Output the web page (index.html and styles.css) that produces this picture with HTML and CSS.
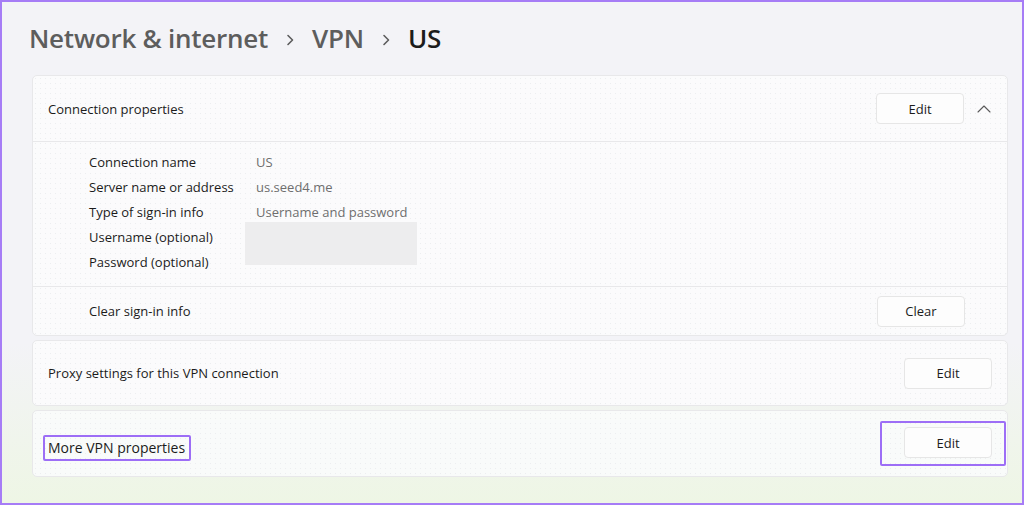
FILE: index.html
```
<!DOCTYPE html>
<html lang="en">
<head>
    <meta charset="UTF-8">
    <meta name="viewport" content="width=device-width, initial-scale=1.0">
    <title>VPN - US</title>
    <link rel="stylesheet" href="styles.css">
</head>

<body>
    <div class="frame">
        <h1 class="crumbs">
            <span class="crumb">Network &amp; internet</span>
            <svg class="sep" viewBox="0 0 8 12" width="8" height="12"><path d="M2 1.5l4.5 4.5L2 10.5" fill="none" stroke="currentColor" stroke-width="1.6" stroke-linecap="round" stroke-linejoin="round"></path></svg>
            <span class="crumb">VPN</span>
            <svg class="sep" viewBox="0 0 8 12" width="8" height="12"><path d="M2 1.5l4.5 4.5L2 10.5" fill="none" stroke="currentColor" stroke-width="1.6" stroke-linecap="round" stroke-linejoin="round"></path></svg>
            <span class="crumb current">US</span>
        </h1>

        <div class="card">
            <div class="row head">
                <span class="title">Connection properties</span>
                <button type="button" class="btn">Edit</button>
                <svg class="chev" viewBox="0 0 14 8" width="14" height="8"><path d="M1 7l6-6 6 6" fill="none" stroke="currentColor" stroke-width="1.1" stroke-linecap="round" stroke-linejoin="round"></path></svg>
            </div>
            <div class="details">
                <span class="label">Connection name</span>
                <span class="value">US</span>
                <span class="label">Server name or address</span>
                <span class="value">us.seed4.me</span>
                <span class="label">Type of sign-in info</span>
                <span class="value">Username and password</span>
                <span class="label">Username (optional)</span>
                <span class="redact"></span>
                <span class="label">Password (optional)</span>
            </div>
            <div class="row sub">
                <span class="title">Clear sign-in info</span>
                <button type="button" class="btn">Clear</button>
            </div>
        </div>

        <div class="card">
            <div class="row">
                <span class="title">Proxy settings for this VPN connection</span>
                <button type="button" class="btn">Edit</button>
            </div>
        </div>

        <div class="card last">
            <div class="row more">
                <span class="title mark">More VPN properties</span>
                <div class="mark-box">
                    <button type="button" class="btn">Edit</button>
                </div>
            </div>
        </div>
    </div>
</body>
</html>
```

FILE: styles.css
```
* {
    font-family: 'Open Sans', 'Noto Sans', sans-serif;
    box-sizing: border-box;
}
body {
    margin: 0;
    padding: 0;
}
.frame {
    display: flex;
    flex-direction: column;
    gap: 4px;
    height: 505px;
    padding: 0 14px 0 30px;
    border: 2px solid #a67cf6;
    background: linear-gradient(180deg, #f3f3f7 0%, #f3f3f7 68%, #eef6e5 100%);
    overflow: hidden;
}
.crumbs {
    display: flex;
    align-items: center;
    gap: 18px;
    margin: 17px 0 14px -3px;
    font-size: 26px;
    font-weight: 600;
    line-height: 38px;
    letter-spacing: -0.25px;
    color: #5d5d5d;
}
.crumb.current {
    color: #1c1c1c;
}
.sep {
    margin-top: 4px;
    color: #5d5d5d;
}
.card {
    background-color: #fbfbfc;
    background-image: radial-gradient(#eceef0 0.6px, transparent 0.7px);
    background-size: 5px 5px;
    border: 1px solid #e8e8ea;
    border-radius: 5px;
}
.card.last {
    background-color: #f9fbfa;
}
.row {
    display: flex;
    align-items: center;
    height: 64px;
    padding: 0 15px;
}
.row .title {
    flex: 1;
    font-size: 13px;
    color: #1b1b1b;
}
.head {
    height: 66px;
    padding-right: 16px;
    border-bottom: 1px solid #e8e8ea;
}
.sub {
    height: 49px;
    padding-left: 56px;
    padding-right: 42px;
    border-top: 1px solid #e8e8ea;
}
.more {
    height: 65px;
}
.btn {
    width: 88px;
    height: 31px;
    border: 1px solid #e6e6e6;
    border-radius: 4px;
    background-color: #fdfdfd;
    font-size: 13px;
    color: #1b1b1b;
    cursor: pointer;
}
.chev {
    margin-left: 13px;
    color: #5a5a5a;
}
.details {
    display: grid;
    grid-template-columns: 167px 1fr;
    grid-auto-rows: 25px;
    align-items: center;
    padding: 7px 0 12px 56px;
    font-size: 13px;
}
.label {
    grid-column: 1;
    color: #1b1b1b;
}
.value {
    grid-column: 2;
    color: #6e6e6e;
}
.redact {
    grid-column: 2;
    grid-row: 4 / span 2;
    align-self: start;
    width: 172px;
    height: 43px;
    margin: -2px 0 0 -11px;
    background-color: #ededee;
}
.row .mark {
    flex: 0 0 auto;
    height: 26px;
    margin: 8px auto 0 -5px;
    padding: 1px 4px 0 3px;
    border: 2px solid #9d6ef6;
    border-radius: 2px;
    font-size: 14px;
    line-height: 20px;
}
.mark-box {
    margin-right: -14px;
    padding: 4px 12px 6px 22px;
    border: 2px solid #9d6ef6;
    border-radius: 2px;
}
```
